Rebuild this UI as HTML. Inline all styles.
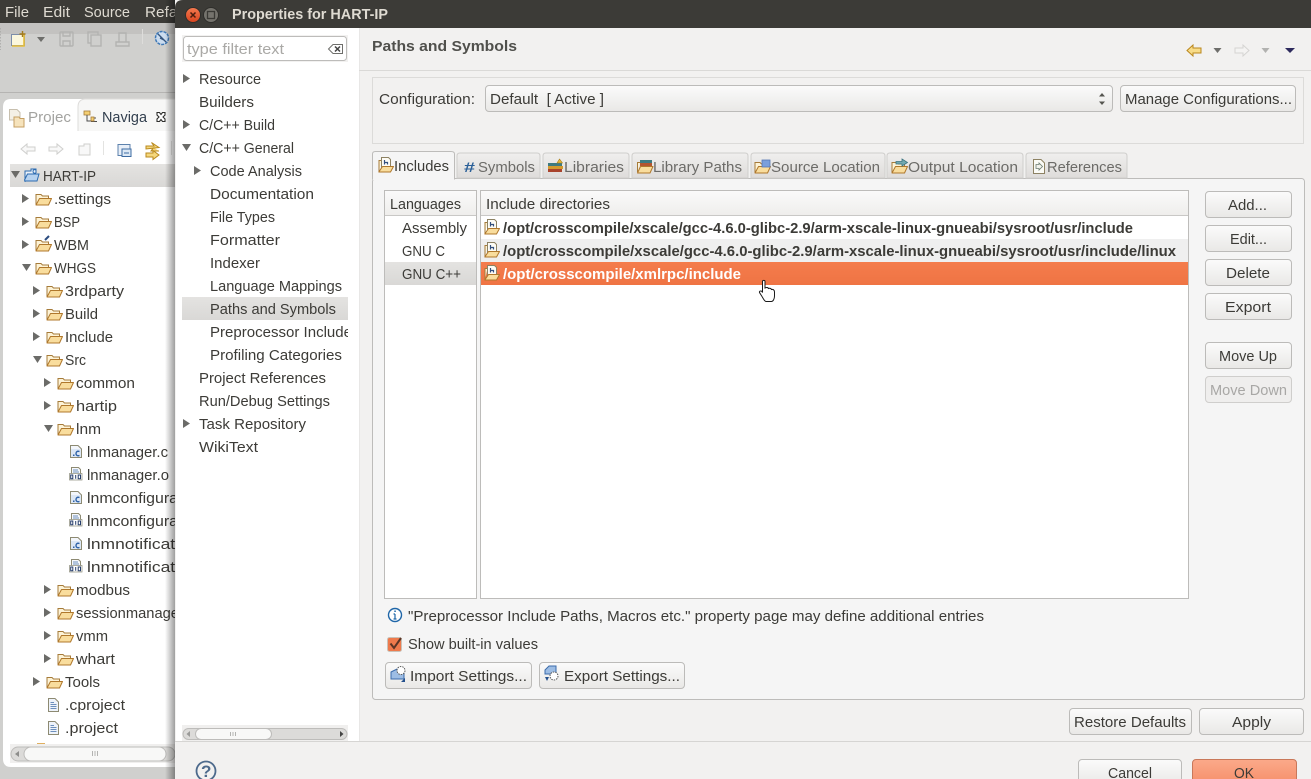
<!DOCTYPE html>
<html><head><meta charset="utf-8"><title>Properties for HART-IP</title>
<style>
html,body{margin:0;padding:0;background:#d0d0ce;overflow:hidden}
svg{display:block}
text{font-family:"Liberation Sans",sans-serif;font-size:15px;fill:#3c3b37}
.b{font-weight:bold}
.t{fill:#6c6b68}
</style></head><body>
<svg xmlns="http://www.w3.org/2000/svg" width="1311" height="779" viewBox="0 0 1311 779">
<defs>
<linearGradient id="btn" x1="0" y1="0" x2="0" y2="1"><stop offset="0" stop-color="#fbfbfb"/><stop offset="1" stop-color="#e9e8e6"/></linearGradient>
<linearGradient id="tab" x1="0" y1="0" x2="0" y2="1"><stop offset="0" stop-color="#f0efee"/><stop offset="1" stop-color="#dedcda"/></linearGradient>
<linearGradient id="hd" x1="0" y1="0" x2="0" y2="1"><stop offset="0" stop-color="#fafafa"/><stop offset="1" stop-color="#efeeec"/></linearGradient>
<linearGradient id="sel" x1="0" y1="0" x2="0" y2="1"><stop offset="0" stop-color="#e4e3e1"/><stop offset="1" stop-color="#d9d8d6"/></linearGradient>
<linearGradient id="org" x1="0" y1="0" x2="0" y2="1"><stop offset="0" stop-color="#f47c4c"/><stop offset="1" stop-color="#ef7444"/></linearGradient>
<linearGradient id="ok" x1="0" y1="0" x2="0" y2="1"><stop offset="0" stop-color="#fba98a"/><stop offset="1" stop-color="#f58e68"/></linearGradient>
<linearGradient id="close" x1="0" y1="0" x2="0" y2="1"><stop offset="0" stop-color="#f47a50"/><stop offset="1" stop-color="#d9431d"/></linearGradient>
<linearGradient id="shadow" x1="0" y1="0" x2="1" y2="0"><stop offset="0" stop-color="#000" stop-opacity="0"/><stop offset="1" stop-color="#000" stop-opacity=".38"/></linearGradient>
<clipPath id="tree"><rect x="176" y="28" width="172" height="697"/></clipPath>
<clipPath id="left"><rect x="0" y="0" width="175" height="779"/></clipPath>

<g id="ar"><path d="M0 0L7 4.5L0 9Z" fill="#6b6b68"/></g>
<g id="ad"><path d="M0 0L9 0L4.5 7Z" fill="#6b6b68"/></g>
<g id="fo">
<path d="M1 13.500V3.500H6L7.500 5H13.500V8" fill="#fdf3d6" stroke="#a67b3a"/>
<path d="M1 14L4.500 7.500H16.500L13.500 14Z" fill="#f9dd9d" stroke="#b0782c" stroke-linejoin="round"/>
</g>
<g id="inc">
<path d="M1 14.500V3.500H3.500" fill="#fdf3d6" stroke="#a67b3a"/>
<path d="M3.500 .5H10.500L12.500 2.500V10H3.500Z" fill="#fdfcf6" stroke="#8d8263"/>
<path d="M6.500 3V7.500M6.500 5.500H9.500V7.500" fill="none" stroke="#33507e" stroke-width="1.200"/>
<path d="M.8 15L4.500 9.500H15.500L12.500 15Z" fill="#f9dd9d" stroke="#b0782c" stroke-linejoin="round"/>
</g>
<g id="cf">
<path d="M1.500 1.500H9L12.500 5V13.500H1.500Z" fill="#f3f6fb" stroke="#8d8a72"/>
<rect x="2" y="5" width="10" height="8" fill="#dce7f5"/>
<rect x="4" y="10.500" width="1.500" height="1.500" fill="#2e62a8"/>
<path d="M10.500 7.500C8 6.700 7 8 7 9.500S8 12.300 10.500 11.500" fill="none" stroke="#2e62a8" stroke-width="1.400"/>
</g>
<g id="of">
<path d="M2.500 1.500H9.500L11.500 3.500V8.500H2.500Z" fill="#f7f9fc" stroke="#8d8a72"/>
<path d="M4 4H9M4 6H10" stroke="#6d8fbc"/>
<rect x=".5" y="7.500" width="12.500" height="6.500" fill="#fff" stroke="#8a8a78" stroke-width=".7"/>
<path d="M1.700 9H3.800V12.700H1.700ZM6.700 9V12.700M9.200 9H11.500V12.700H9.200Z" fill="none" stroke="#253d6b"/>
</g>
<g id="txt">
<path d="M1.500 .5H8L11.500 4V13.500H1.500Z" fill="#eef3fa" stroke="#8d8a72"/>
<path d="M3.500 4.500H7M3.500 6.500H9.500M3.500 8.500H9.500M3.500 10.500H9.500" stroke="#6d8fbc"/>
</g>
</defs>

<!-- Workbench behind -->
<rect width="1311" height="779" fill="#d0d0ce"/>
<rect x="0" y="0" width="1311" height="23" fill="#3c3b37"/>
<rect x="0" y="23" width="175" height="11" fill="#c3c2c0"/>
<rect x="0" y="92" width="175" height="1" fill="#b5b4b2"/>
<text x="5" y="17" textLength="24" lengthAdjust="spacingAndGlyphs" style="fill:#dfdbd2">File</text>
<text x="43" y="17" textLength="27" lengthAdjust="spacingAndGlyphs" style="fill:#dfdbd2">Edit</text>
<text x="84" y="17" textLength="46" lengthAdjust="spacingAndGlyphs" style="fill:#dfdbd2">Source</text>
<text x="145" y="17" textLength="40" lengthAdjust="spacingAndGlyphs" style="fill:#dfdbd2" clip-path="url(#left)">Refac</text>
<!-- toolbar icons -->
<path d="M0 28V50" stroke="#a9a9a6" stroke-width="1.600" stroke-dasharray="1.500 1.500"/>
<rect x="11.500" y="34.500" width="13" height="11" fill="#fbf7dd" stroke="#7d8eaa"/>
<path d="M24 34V46H12" fill="none" stroke="#e8bf3a" stroke-width="1.600"/>
<path d="M22.500 31V37M19.500 34H25.500" stroke="#a47c1e" stroke-width="1.400"/>
<path d="M37 37H45L41 42Z" fill="#6e6e6b"/>
<g fill="none" stroke="#b3b3b1" stroke-width="1.400"><rect x="60" y="32" width="13" height="14" rx="1"/><path d="M63 32v4h7v-4M63 46v-5h7v5"/><rect x="88" y="32" width="10" height="11"/><rect x="91" y="35" width="10" height="11" fill="#cfcfcd"/><path d="M116 42h13v4h-13zM119 42v-9h7v9"/></g>
<path d="M142.500 29V44" stroke="#dedddb" stroke-width="1"/>
<circle cx="162" cy="38" r="6.500" fill="#cbdcef" stroke="#3e78b6" stroke-width="1.500" stroke-dasharray="3 1"/>
<path d="M158 34L166 42M160 38L164 40" stroke="#35567e" stroke-width="1.300"/>

<!-- left view -->
<path d="M3 107Q3 99 11 99H175V767H11Q3 767 3 759Z" fill="#fff"/>
<path d="M78 131V107Q78 99 86 99H175V131Z" fill="#f7f7f6"/>
<path d="M78 131V107Q78 99 86 99H175" fill="none" stroke="#dedddb"/>
<rect x="84" y="131" width="91" height="2" fill="#fff"/>
<path d="M9.500 109.500H17L20 112.500V120H9.500Z" fill="#f4f0e6" stroke="#c7bfae"/>
<path d="M14 117H19L20 118.500H24V127H14Z" fill="#f6e3bc" stroke="#c59f63"/>
<text x="28" y="122" textLength="43" lengthAdjust="spacingAndGlyphs" style="fill:#a3a3a0">Projec</text>
<rect x="84" y="111" width="6" height="4" fill="#f4cf73" stroke="#a67b3a" stroke-width=".8"/>
<path d="M87 115V121H91M91 118H96M91 121.500H97" stroke="#4c4c4c" fill="none"/>
<rect x="91" y="117" width="3" height="4" fill="#f4cf73" stroke="#a67b3a" stroke-width=".8"/>
<text x="102" y="122" textLength="45" lengthAdjust="spacingAndGlyphs" style="fill:#33404f">Naviga</text>
<path d="M157 112.500L159.500 112.500L161 114.500L162.500 112.500L165 112.500L165 115L163 117L165 119L165 121.500L162.500 121.500L161 119.500L159.500 121.500L157 121.500L157 119L159 117L157 115Z" fill="#fff" stroke="#2e2e2c" stroke-width="1.100"/>
<!-- view toolbar -->
<g fill="#f8f8f8" stroke="#cfcfcd" stroke-width="1"><path d="M21 149L27 144V147H35V151H27V154Z"/><path d="M63 149L57 144V147H49V151H57V154Z"/><path d="M79 146H84V144H90V155H79Z"/></g>
<path d="M103.500 141V155" stroke="#e3e3e1"/>
<rect x="118" y="144.500" width="12" height="11" fill="#e8eff8" stroke="#5d82ad"/>
<rect x="122" y="149" width="9" height="7.500" fill="#dce8f5" stroke="#3d6ba2"/>
<path d="M124 153H129" stroke="#3d6ba2"/>
<path d="M146 146H154L151.500 142.500L159 147.500L146 149ZM159 151H151L153.500 147.500" fill="#f5d77c" stroke="#b98a1f"/>
<path d="M146 153H153V150.500L159 155L153 159.500V157H146Z" fill="#f5d77c" stroke="#b98a1f"/>
<path d="M171.500 141V155" stroke="#e3e3e1"/>

<!-- left tree -->
<rect x="10" y="164" width="165" height="23" fill="url(#sel)"/>
<g clip-path="url(#left)">
<use href="#ad" x="11" y="171"/>
<path d="M25 182V171H31V169H36V173" fill="#eaf1f9" stroke="#2c6bb0"/>
<path d="M24.500 180L27.500 174H39L37 181H25Z" fill="#b6d2ef" stroke="#2c6bb0"/>
<path d="M36 170C34 169 33 170 33 171.500S34 173.500 36 173" fill="none" stroke="#2c6bb0"/>
<text x="43" y="181" textLength="53" lengthAdjust="spacingAndGlyphs">HART-IP</text>
<use href="#ar" x="22" y="194"/><use href="#fo" x="35" y="191"/><text x="54" y="204" textLength="57" lengthAdjust="spacingAndGlyphs">.settings</text>
<use href="#ar" x="22" y="217"/><use href="#fo" x="35" y="214"/><text x="54" y="227" textLength="26" lengthAdjust="spacingAndGlyphs">BSP</text>
<use href="#ar" x="22" y="240"/><use href="#fo" x="35" y="237"/><path d="M45 240L49 236" stroke="#2c4d80" stroke-width="2"/><text x="54" y="250" textLength="35" lengthAdjust="spacingAndGlyphs">WBM</text>
<use href="#ad" x="22" y="264"/><use href="#fo" x="35" y="260"/><text x="54" y="273" textLength="42" lengthAdjust="spacingAndGlyphs">WHGS</text>
<use href="#ar" x="33" y="286"/><use href="#fo" x="46" y="283"/><text x="65" y="296" textLength="59" lengthAdjust="spacingAndGlyphs">3rdparty</text>
<use href="#ar" x="33" y="309"/><use href="#fo" x="46" y="306"/><text x="65" y="319" textLength="33" lengthAdjust="spacingAndGlyphs">Build</text>
<use href="#ar" x="33" y="332"/><use href="#fo" x="46" y="329"/><text x="65" y="342" textLength="48" lengthAdjust="spacingAndGlyphs">Include</text>
<use href="#ad" x="33" y="356"/><use href="#fo" x="46" y="352"/><text x="65" y="365" textLength="21" lengthAdjust="spacingAndGlyphs">Src</text>
<use href="#ar" x="44" y="378"/><use href="#fo" x="57" y="375"/><text x="76" y="388" textLength="59" lengthAdjust="spacingAndGlyphs">common</text>
<use href="#ar" x="44" y="401"/><use href="#fo" x="57" y="398"/><text x="76" y="411" textLength="41" lengthAdjust="spacingAndGlyphs">hartip</text>
<use href="#ad" x="44" y="425"/><use href="#fo" x="57" y="421"/><text x="76" y="434" textLength="25" lengthAdjust="spacingAndGlyphs">lnm</text>
<use href="#cf" x="69" y="444"/><text x="87" y="457" textLength="81" lengthAdjust="spacingAndGlyphs">lnmanager.c</text>
<use href="#of" x="69" y="466"/><text x="87" y="480" textLength="82" lengthAdjust="spacingAndGlyphs">lnmanager.o</text>
<use href="#cf" x="69" y="490"/><text x="87" y="503" textLength="91" lengthAdjust="spacingAndGlyphs">lnmconfigura</text>
<use href="#of" x="69" y="512"/><text x="87" y="526" textLength="91" lengthAdjust="spacingAndGlyphs">lnmconfigura</text>
<use href="#cf" x="69" y="536"/><text x="87" y="549" textLength="92" lengthAdjust="spacingAndGlyphs">lnmnotificati</text>
<use href="#of" x="69" y="558"/><text x="87" y="572" textLength="92" lengthAdjust="spacingAndGlyphs">lnmnotificati</text>
<use href="#ar" x="44" y="585"/><use href="#fo" x="57" y="582"/><text x="76" y="595" textLength="54" lengthAdjust="spacingAndGlyphs">modbus</text>
<use href="#ar" x="44" y="608"/><use href="#fo" x="57" y="605"/><text x="76" y="618" textLength="103" lengthAdjust="spacingAndGlyphs">sessionmanage</text>
<use href="#ar" x="44" y="631"/><use href="#fo" x="57" y="628"/><text x="76" y="641" textLength="32" lengthAdjust="spacingAndGlyphs">vmm</text>
<use href="#ar" x="44" y="654"/><use href="#fo" x="57" y="651"/><text x="76" y="664" textLength="39" lengthAdjust="spacingAndGlyphs">whart</text>
<use href="#ar" x="33" y="677"/><use href="#fo" x="46" y="674"/><text x="65" y="687" textLength="35" lengthAdjust="spacingAndGlyphs">Tools</text>
<use href="#txt" x="47" y="698"/><text x="65" y="710" textLength="60" lengthAdjust="spacingAndGlyphs">.cproject</text>
<use href="#txt" x="47" y="721"/><text x="65" y="733" textLength="53" lengthAdjust="spacingAndGlyphs">.project</text>
<rect x="37" y="743" width="8" height="3" fill="#e0b060"/>
</g>
<!-- left scrollbar -->
<rect x="10" y="744" width="165" height="19" fill="#f0efee"/>
<rect x="11" y="747" width="164" height="14" rx="7" fill="#dcdbd9" stroke="#bdbcba"/>
<path d="M19 751V757L15 754Z" fill="#8e8e8c"/>
<rect x="24" y="747" width="142" height="14" rx="7" fill="#f8f8f7" stroke="#bdbcba"/>
<path d="M92.500 751V756M95 751V756M97.500 751V756" stroke="#b3b3b1"/>

<!-- dialog shadow -->
<rect x="165" y="0" width="10" height="779" fill="url(#shadow)"/>

<!-- dialog -->
<rect x="175" y="0" width="1136" height="779" fill="#f2f1f0"/>
<path d="M175 28V8Q175 0 183 0H1311V28Z" fill="#3c3b37"/>
<circle cx="193" cy="15" r="7.500" fill="url(#close)" stroke="#2f2e2b"/>
<path d="M190.500 12.500L195.500 17.500M195.500 12.500L190.500 17.500" stroke="#4a1d0e" stroke-width="1.500"/>
<circle cx="211" cy="15" r="7.500" fill="#75736d" stroke="#2f2e2b"/>
<rect x="207.500" y="11.500" width="7" height="7" fill="none" stroke="#3a3935" stroke-width="1.300"/>
<text x="232" y="19" textLength="156" lengthAdjust="spacingAndGlyphs" class="b" style="fill:#dfdbd2">Properties for HART-IP</text>

<!-- tree pane -->
<rect x="176" y="28" width="183" height="713" fill="#fff"/>
<rect x="182" y="35" width="166" height="27" fill="#f2f1f0"/>
<rect x="183.500" y="36.500" width="163" height="24" rx="3" fill="#fff" stroke="#bdbcba"/>
<text x="187" y="54" textLength="97" lengthAdjust="spacingAndGlyphs" style="fill:#aaa9a6">type filter text</text>
<path d="M328.500 49L333 44.500H342.500V53.500H333Z" fill="#fff" stroke="#6e6e6b"/>
<path d="M335 46.500L340 51.500M340 46.500L335 51.500" stroke="#444" stroke-width="1.500"/>
<rect x="182" y="297" width="166" height="23" fill="url(#sel)"/>
<use href="#ar" x="183" y="74"/><text x="199" y="84" textLength="62" lengthAdjust="spacingAndGlyphs">Resource</text>
<text x="199" y="107" textLength="55" lengthAdjust="spacingAndGlyphs">Builders</text>
<use href="#ar" x="183" y="120"/><text x="199" y="130" textLength="76" lengthAdjust="spacingAndGlyphs">C/C++ Build</text>
<use href="#ad" x="182" y="144"/><text x="199" y="153" textLength="95" lengthAdjust="spacingAndGlyphs">C/C++ General</text>
<use href="#ar" x="194" y="166"/><text x="210" y="176" textLength="92" lengthAdjust="spacingAndGlyphs">Code Analysis</text>
<text x="210" y="199" textLength="104" lengthAdjust="spacingAndGlyphs">Documentation</text>
<text x="210" y="222" textLength="65" lengthAdjust="spacingAndGlyphs">File Types</text>
<text x="210" y="245" textLength="70" lengthAdjust="spacingAndGlyphs">Formatter</text>
<text x="210" y="268" textLength="50" lengthAdjust="spacingAndGlyphs">Indexer</text>
<text x="210" y="291" textLength="132" lengthAdjust="spacingAndGlyphs">Language Mappings</text>
<text x="210" y="314" textLength="126" lengthAdjust="spacingAndGlyphs">Paths and Symbols</text>
<g clip-path="url(#tree)"><text x="210" y="337" textLength="142" lengthAdjust="spacingAndGlyphs">Preprocessor Include</text></g>
<text x="210" y="360" textLength="132" lengthAdjust="spacingAndGlyphs">Profiling Categories</text>
<text x="199" y="383" textLength="127" lengthAdjust="spacingAndGlyphs">Project References</text>
<text x="199" y="406" textLength="131" lengthAdjust="spacingAndGlyphs">Run/Debug Settings</text>
<use href="#ar" x="183" y="419"/><text x="199" y="429" textLength="107" lengthAdjust="spacingAndGlyphs">Task Repository</text>
<text x="199" y="452" textLength="59" lengthAdjust="spacingAndGlyphs">WikiText</text>
<!-- tree scrollbar -->
<rect x="182" y="725" width="166" height="16" fill="#f0efee"/>
<rect x="183" y="728.500" width="164" height="11" rx="5.500" fill="#dcdbd9" stroke="#bdbcba"/>
<path d="M190 731V737L186.500 734Z" fill="#9a9a98"/><path d="M340 731V737L343.500 734Z" fill="#444"/>
<rect x="195.500" y="728.500" width="76" height="11" rx="5.500" fill="#f8f8f7" stroke="#bdbcba"/>
<path d="M230.500 732V736M233 732V736M235.500 732V736" stroke="#b3b3b1"/>

<rect x="175" y="741" width="1136" height="1" fill="#d6d5d3"/>
<rect x="359" y="28" width="1" height="713" fill="#e8e7e6"/>

<!-- header -->
<text x="372" y="51" textLength="145" lengthAdjust="spacingAndGlyphs" class="b" style="fill:#50504c">Paths and Symbols</text>
<path d="M1187 50.500L1193 45V48H1201V53H1193V56Z" fill="#f8dc88" stroke="#b9861c"/>
<path d="M1213.500 48H1221.500L1217.500 53Z" fill="#6e6e6b"/>
<path d="M1249 50.500L1243 45V48H1235V53H1243V56Z" fill="#f4f3f2" stroke="#d5d4d2"/>
<path d="M1261.500 48H1269.500L1265.500 53Z" fill="#b2b2b0"/>
<path d="M1285 48H1295L1290 53Z" fill="#2d2a5c"/>
<rect x="359" y="70" width="952" height="1" fill="#dad9d7"/>

<!-- config group -->
<rect x="372.500" y="77.500" width="931" height="66" fill="#f2f1f0" stroke="#dcdbd9"/>
<text x="379" y="104" textLength="96" lengthAdjust="spacingAndGlyphs">Configuration:</text>
<rect x="485.500" y="85.500" width="627" height="26" rx="3.500" fill="url(#btn)" stroke="#bcbbb9"/>
<text x="490" y="104" textLength="114" lengthAdjust="spacingAndGlyphs">Default&#160;&#160;[ Active ]</text>
<path d="M1099 96.500L1102 93L1105 96.500ZM1099 101.500L1102 105L1105 101.500Z" fill="#55554f"/>
<rect x="1120.500" y="85.500" width="175" height="26" rx="3.500" fill="url(#btn)" stroke="#bcbbb9"/>
<text x="1125" y="104" textLength="167" lengthAdjust="spacingAndGlyphs">Manage Configurations...</text>

<!-- tab folder -->
<rect x="372.500" y="178.500" width="932" height="521" rx="3" fill="#f5f5f5" stroke="#bdbcba"/>
<g fill="url(#tab)" stroke="#cfcecc">
<path d="M457 178V156Q457 153 460 153H537Q540 153 540 156V178Z"/>
<path d="M543 178V156Q543 153 546 153H626Q629 153 629 156V178Z"/>
<path d="M632 178V156Q632 153 635 153H745Q748 153 748 156V178Z"/>
<path d="M751 178V156Q751 153 754 153H882Q885 153 885 156V178Z"/>
<path d="M887 178V156Q887 153 890 153H1020Q1023 153 1023 156V178Z"/>
<path d="M1026 178V156Q1026 153 1029 153H1124Q1127 153 1127 156V178Z"/>
</g>
<path d="M372.500 179V154Q372.500 151.500 375.500 151.500H451Q454.500 151.500 454.500 154V179Z" fill="#f5f5f5" stroke="#bdbcba"/>
<rect x="373" y="177" width="81" height="3" fill="#f5f5f5"/>
<use href="#inc" x="378" y="157"/><text x="394" y="171" textLength="55" lengthAdjust="spacingAndGlyphs">Includes</text>
<text x="464" y="172" textLength="11" lengthAdjust="spacingAndGlyphs" class="b" style="fill:#2b6098;font-size:14px">#</text><text x="478" y="172" textLength="57" lengthAdjust="spacingAndGlyphs" class="t">Symbols</text>
<rect x="548" y="163" width="14" height="3" fill="#3d7a80"/><rect x="548" y="166" width="15" height="3" fill="#d49a2e"/><rect x="548" y="169" width="14" height="3" fill="#a9432c"/><path d="M557 163L559.500 159L562.500 163Z" fill="#e5b83a" stroke="#a77b14" stroke-width=".6"/>
<text x="564" y="172" textLength="60" lengthAdjust="spacingAndGlyphs" class="t">Libraries</text>
<path d="M637.500 172V162.500H640" fill="#fdf3d6" stroke="#a67b3a"/>
<rect x="640" y="160" width="12" height="3" fill="#3d7a80"/><rect x="640" y="163" width="12" height="3" fill="#b3552f"/>
<path d="M637.500 173L640.500 166.500H653L650 173Z" fill="#f9dd9d" stroke="#b0782c" stroke-linejoin="round"/>
<text x="653" y="172" textLength="89" lengthAdjust="spacingAndGlyphs" class="t">Library Paths</text>
<use href="#fo" x="754" y="159"/><rect x="762" y="160" width="8" height="7" fill="#7a9fdc" stroke="#5577b3" stroke-width=".8"/>
<text x="771" y="172" textLength="109" lengthAdjust="spacingAndGlyphs" class="t">Source Location</text>
<use href="#fo" x="891" y="159"/><path d="M896 161.500H902V159L907.500 162.500L902 166V164H896Z" fill="#73a9b0" stroke="#3b7480" stroke-width=".8"/>
<text x="908" y="172" textLength="110" lengthAdjust="spacingAndGlyphs" class="t">Output Location</text>
<path d="M1033.500 159.500H1041L1044.500 163V173.500H1033.500Z" fill="#fbfbf6" stroke="#8d8263"/><path d="M1036 164.500H1039V163L1042.500 166.500L1039 170V168.500H1036Z" fill="#f2f2ec" stroke="#6a7b70" stroke-width=".8"/>
<text x="1047" y="172" textLength="75" lengthAdjust="spacingAndGlyphs" class="t">References</text>

<!-- languages table -->
<rect x="384.500" y="190.500" width="92" height="408" fill="#fff" stroke="#bdbcba"/>
<rect x="385" y="191" width="91" height="24" fill="url(#hd)"/>
<path d="M385 215.500H476" stroke="#c9c8c6"/>
<text x="390" y="209" textLength="71" lengthAdjust="spacingAndGlyphs">Languages</text>
<rect x="385" y="262" width="91" height="23" fill="url(#sel)"/>
<text x="402" y="233" textLength="65" lengthAdjust="spacingAndGlyphs">Assembly</text>
<text x="402" y="256" textLength="43" lengthAdjust="spacingAndGlyphs">GNU C</text>
<text x="402" y="279" textLength="59" lengthAdjust="spacingAndGlyphs">GNU C++</text>

<!-- include table -->
<rect x="480.500" y="190.500" width="708" height="408" fill="#fff" stroke="#bdbcba"/>
<rect x="481" y="191" width="707" height="24" fill="url(#hd)"/>
<path d="M481 215.500H1188" stroke="#c9c8c6"/>
<text x="486" y="209" textLength="124" lengthAdjust="spacingAndGlyphs">Include directories</text>
<rect x="481" y="239" width="707" height="23" fill="#efefef"/>
<rect x="481" y="262" width="707" height="23" fill="url(#org)"/>
<use href="#inc" x="484" y="219"/><text x="503" y="233" textLength="630" lengthAdjust="spacingAndGlyphs" class="b">/opt/crosscompile/xscale/gcc-4.6.0-glibc-2.9/arm-xscale-linux-gnueabi/sysroot/usr/include</text>
<use href="#inc" x="484" y="242"/><text x="503" y="256" textLength="673" lengthAdjust="spacingAndGlyphs" class="b">/opt/crosscompile/xscale/gcc-4.6.0-glibc-2.9/arm-xscale-linux-gnueabi/sysroot/usr/include/linux</text>
<use href="#inc" x="484" y="265"/><text x="503" y="279" textLength="238" lengthAdjust="spacingAndGlyphs" class="b" style="fill:#fff">/opt/crosscompile/xmlrpc/include</text>
<!-- cursor -->
<path d="M762.500 281.500C762.500 280 765 280 765 281.500V288C767 287 768 287.500 768.500 288.500C770 288 771 288.500 771.500 289.500C773 289 774.500 290 774.500 292V296C774.500 299 773 301.500 771.500 301.500H766C764.500 301.500 763 298 762 296.500L759.500 292.500C759 291 761 290.500 762 291.500L762.500 292.500Z" fill="#fff" stroke="#1a1a1a"/>

<!-- side buttons -->
<g fill="url(#btn)" stroke="#bcbbb9">
<rect x="1205.500" y="191.500" width="86" height="26" rx="3.500"/>
<rect x="1205.500" y="225.500" width="86" height="26" rx="3.500"/>
<rect x="1205.500" y="259.500" width="86" height="26" rx="3.500"/>
<rect x="1205.500" y="293.500" width="86" height="26" rx="3.500"/>
<rect x="1205.500" y="342.500" width="86" height="26" rx="3.500"/>
</g>
<rect x="1205.500" y="376.500" width="86" height="26" rx="3.500" fill="#efeeed" stroke="#cfcecc"/>
<text x="1228" y="210" textLength="39" lengthAdjust="spacingAndGlyphs">Add...</text>
<text x="1230" y="244" textLength="37" lengthAdjust="spacingAndGlyphs">Edit...</text>
<text x="1226" y="278" textLength="44" lengthAdjust="spacingAndGlyphs">Delete</text>
<text x="1225" y="312" textLength="46" lengthAdjust="spacingAndGlyphs">Export</text>
<text x="1219" y="361" textLength="58" lengthAdjust="spacingAndGlyphs">Move Up</text>
<text x="1210" y="395" textLength="77" lengthAdjust="spacingAndGlyphs" style="fill:#a8a7a5">Move Down</text>

<!-- info -->
<circle cx="395" cy="615" r="6.500" fill="#fff" stroke="#1f66a8" stroke-width="1.400"/>
<path d="M395 614V619M393.500 619H396.500M393.500 614H395" stroke="#1f66a8" stroke-width="1.200" fill="none"/>
<rect x="394.300" y="610.500" width="1.500" height="1.500" fill="#1f66a8"/>
<text x="408" y="621" textLength="576" lengthAdjust="spacingAndGlyphs">"Preprocessor Include Paths, Macros etc." property page may define additional entries</text>

<rect x="387.500" y="637.500" width="14" height="14" rx="2" fill="#ee7a4c" stroke="#c9c2b9"/>
<path d="M390.500 643.500L394 648L401 638" fill="none" stroke="#5a3526" stroke-width="2"/>
<text x="408" y="649" textLength="130" lengthAdjust="spacingAndGlyphs">Show built-in values</text>

<rect x="385.500" y="662.500" width="146" height="26" rx="3.500" fill="url(#btn)" stroke="#bcbbb9"/>
<rect x="539.500" y="662.500" width="145" height="26" rx="3.500" fill="url(#btn)" stroke="#bcbbb9"/>
<path d="M391 672L397 669H404V679H391Z" fill="#9dbde4" stroke="#3c6cab"/>
<circle cx="401" cy="670.500" r="4" fill="#fff" stroke="#555" stroke-dasharray="1.500 1"/>
<path d="M405 682L405 678L401 682Z" fill="#24508c"/>
<text x="410" y="681" textLength="117" lengthAdjust="spacingAndGlyphs">Import Settings...</text>
<path d="M545 670L549 666H556V674H545Z" fill="#9dbde4" stroke="#3c6cab"/>
<circle cx="554" cy="676" r="4" fill="#fff" stroke="#555" stroke-dasharray="1.500 1"/>
<path d="M545 677L549 677L547 681Z" fill="#24508c"/>
<text x="564" y="681" textLength="116" lengthAdjust="spacingAndGlyphs">Export Settings...</text>

<!-- bottom -->
<rect x="1069.500" y="708.500" width="122" height="26" rx="3.500" fill="url(#btn)" stroke="#bcbbb9"/>
<rect x="1199.500" y="708.500" width="104" height="26" rx="3.500" fill="url(#btn)" stroke="#bcbbb9"/>
<text x="1074" y="727" textLength="112" lengthAdjust="spacingAndGlyphs">Restore Defaults</text>
<text x="1232" y="727" textLength="39" lengthAdjust="spacingAndGlyphs">Apply</text>

<circle cx="206" cy="771" r="9.500" fill="#f2f1f0" stroke="#4d6a8c" stroke-width="1.800"/>
<text x="201" y="777" class="b" style="fill:#4d6a8c;font-size:17px">?</text>

<rect x="1078.500" y="759.500" width="103" height="26" rx="3.500" fill="url(#btn)" stroke="#bcbbb9"/>
<rect x="1192.500" y="759.500" width="104" height="26" rx="3.500" fill="url(#ok)" stroke="#c9785a"/>
<text x="1108" y="778" textLength="44" lengthAdjust="spacingAndGlyphs">Cancel</text>
<text x="1234" y="778" textLength="20" lengthAdjust="spacingAndGlyphs">OK</text>
</svg>
</body></html>
